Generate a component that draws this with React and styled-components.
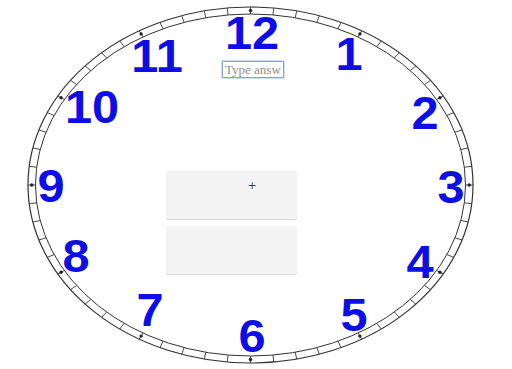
import styled, { createGlobalStyle } from "styled-components";

const GlobalStyle = createGlobalStyle`
  html, body {
    margin: 0;
    padding: 0;
    background: #fff;
    overflow: hidden;
  }
`;

const CX = 250.5;
const CY = 185;
const OUTER = { rx: 222.5, ry: 178 };
const INNER = { rx: 215, ry: 171 };

const hours = [
  { n: "12", x: 252, y: 33 },
  { n: "1", x: 349, y: 54 },
  { n: "2", x: 425, y: 113 },
  { n: "3", x: 451, y: 187 },
  { n: "4", x: 420, y: 262 },
  { n: "5", x: 354, y: 315 },
  { n: "6", x: 252, y: 336 },
  { n: "7", x: 150, y: 310 },
  { n: "8", x: 76, y: 256 },
  { n: "9", x: 51, y: 186 },
  { n: "10", x: 92, y: 107 },
  { n: "11", x: 157, y: 56 },
];

const Face = styled.div`
  position: relative;
  width: 512px;
  height: 369px;
`;

const Dial = styled.svg`
  position: absolute;
  inset: 0;
`;

const Hour = styled.span`
  position: absolute;
  left: ${(p) => p.$x}px;
  top: ${(p) => p.$y}px;
  transform: translate(-50%, -50%) scaleX(1.06);
  font-family: "Liberation Sans", Arial, sans-serif;
  font-weight: bold;
  font-size: 46px;
  line-height: 1;
  color: #0d0de8;
  white-space: nowrap;
`;

const Center = styled.div`
  position: relative;
  display: flex;
  flex-direction: column;
  align-items: flex-start;
  padding: 61px 0 0 166px;
`;

const Answer = styled.input`
  box-sizing: border-box;
  width: 62px;
  height: 17px;
  margin-left: 56px;
  padding: 0 2px;
  border: 1px solid #86a4c8;
  box-shadow: 0 0 0 1px #d2deec;
  border-radius: 1px;
  font-family: "Liberation Serif", "Times New Roman", serif;
  font-size: 13px;
  outline: none;
  &::placeholder {
    color: #8f8f8f;
  }
`;

const Slots = styled.div`
  display: flex;
  flex-direction: column;
  gap: 7px;
  margin-top: 93px;
`;

const Slot = styled.div`
  width: 131px;
  height: 48px;
  background: #f4f4f4;
  border-radius: 2px;
  box-shadow: 0 1px 1px #d8d8d8;
`;

const Cursor = styled.span`
  position: absolute;
  left: 252px;
  top: 185px;
  transform: translate(-50%, -50%);
  font-family: "DejaVu Sans", sans-serif;
  font-size: 11px;
  line-height: 1;
  color: #444;
`;

function ellipsePoint(r, deg) {
  const t = (deg * Math.PI) / 180;
  return [CX + r.rx * Math.sin(t), CY - r.ry * Math.cos(t)];
}

function ClockRing() {
  const ticks = [];
  for (let i = 0; i < 60; i++) {
    const deg = i * 6;
    const [x1, y1] = ellipsePoint(INNER, deg);
    const [x2, y2] = ellipsePoint(OUTER, deg);
    ticks.push(
      <line key={i} x1={x1} y1={y1} x2={x2} y2={y2} stroke="#333" strokeWidth="0.9" />
    );
    if (i % 5 === 0) {
      const [mx, my] = ellipsePoint(
        { rx: (INNER.rx + OUTER.rx) / 2, ry: (INNER.ry + OUTER.ry) / 2 },
        deg
      );
      ticks.push(<circle key={"m" + i} cx={mx} cy={my} r="1.7" fill="#222" />);
    }
  }
  return (
    <Dial width="512" height="369" viewBox="0 0 512 369">
      <ellipse cx={CX} cy={CY} rx={OUTER.rx} ry={OUTER.ry} fill="none" stroke="#333" strokeWidth="1.2" />
      <ellipse cx={CX} cy={CY} rx={INNER.rx} ry={INNER.ry} fill="none" stroke="#333" strokeWidth="1" />
      {ticks}
    </Dial>
  );
}

export default function App() {
  return (
    <>
      <GlobalStyle />
      <Face>
        <ClockRing />
        {hours.map((h) => (
          <Hour key={h.n} $x={h.x} $y={h.y}>
            {h.n}
          </Hour>
        ))}
        <Center>
          <Answer type="text" placeholder="Type answer" />
          <Slots>
            <Slot />
            <Slot />
          </Slots>
        </Center>
        <Cursor>+</Cursor>
      </Face>
    </>
  );
}
